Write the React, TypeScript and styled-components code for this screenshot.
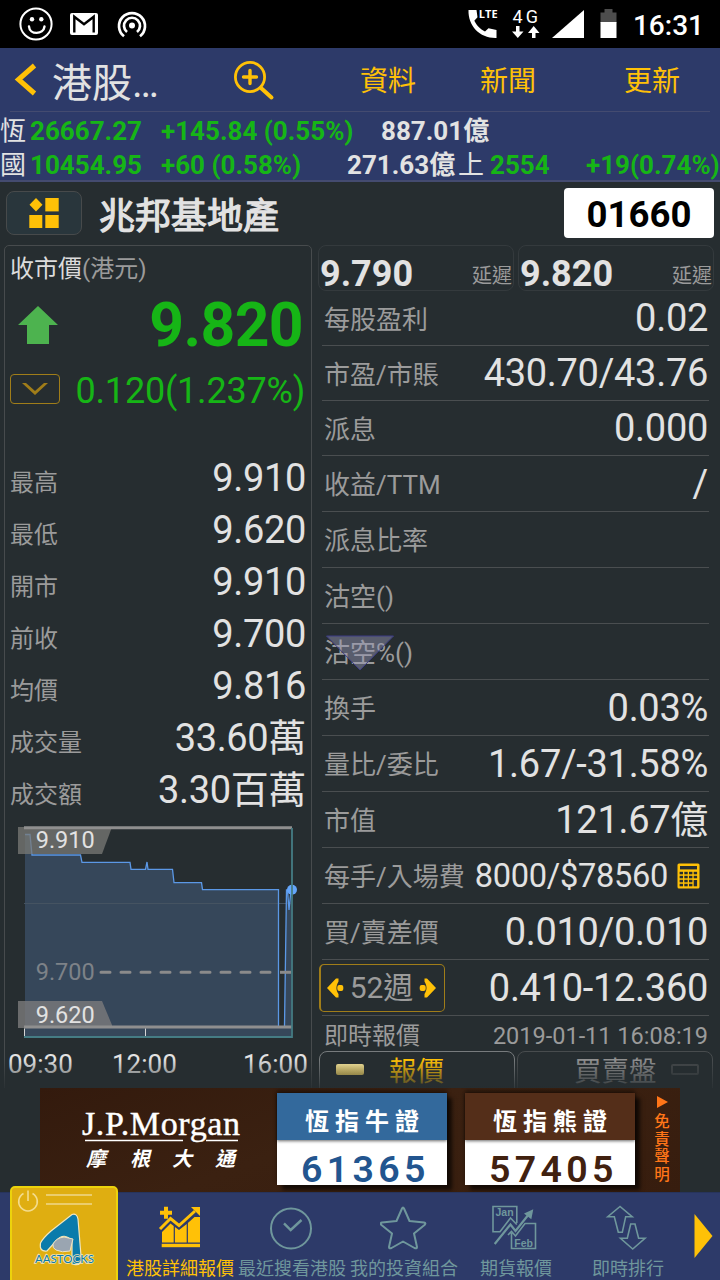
import React from "react";
import styled, { createGlobalStyle } from "styled-components";

const C = {
  bg: "#262d30",
  navy: "#2d3a69",
  gold: "#ffc107",
  green: "#16b516",
  text: "#e2e2e2",
  dim: "#9b9b9b",
  line: "#4a4e50",
  teal: "#6f979c",
};

const Global = createGlobalStyle`
  * { box-sizing: border-box; }
  body { margin: 0; background: ${C.bg}; }
`;

const Screen = styled.div`
  width: 720px;
  height: 1280px;
  display: flex;
  flex-direction: column;
  overflow: hidden;
  background: ${C.bg};
  color: ${C.text};
  font-family: Roboto, "Noto Sans CJK TC", sans-serif;
  white-space: nowrap;
`;

/* ---------- status bar ---------- */
const StatusBar = styled.div`
  height: 48px;
  display: flex;
  align-items: center;
  justify-content: space-between;
  padding: 0 16px 0 18px;
  background: #000;
  color: #fff;
  svg { overflow: visible; }
`;
const StatusGroup = styled.div<{ $gap: number }>`
  display: flex;
  align-items: center;
  gap: ${(p) => p.$gap}px;
`;
const Clock = styled.span`
  font-size: 28px;
  line-height: 48px;
  font-weight: 500;
  padding-top: 3px;
  margin-left: 2px;
`;

/* ---------- title bar and index ticker ---------- */
const TopBar = styled.header`
  height: 64px;
  display: flex;
  align-items: center;
  background: ${C.navy};
  padding: 0 10px;
`;
const TopInner = styled.div`
  flex: 1;
  height: 64px;
  display: grid;
  grid-template-columns: 42px 181px 127px 120px 144px 1fr;
  align-items: center;
  border-bottom: 1px solid #444b70;
`;
const Title = styled.h1`
  margin: 0;
  font-size: 40px;
  font-weight: 400;
  line-height: 55px;
  padding-top: 8px;
`;
const TopLink = styled.span`
  font-size: 28px;
  line-height: 40px;
  padding-top: 5px;
  color: ${C.gold};
`;
const Ticker = styled.div`
  height: 70px;
  padding-top: 2px;
  background: ${C.navy};
  border-bottom: 2px solid #444b70;
`;
const TickerRow = styled.div<{ $cols: string }>`
  display: grid;
  grid-template-columns: ${(p) => p.$cols};
  height: 34px;
  line-height: 34px;
  font-size: 26px;
`;
const TickName = styled.span``;
const TickNum = styled.span<{ $up?: boolean }>`
  font-weight: 700;
  color: ${(p) => (p.$up ? C.green : C.text)};
`;

/* ---------- stock heading ---------- */
const StockHead = styled.div`
  height: 63px;
  display: flex;
  align-items: center;
  padding: 0 6px 1px;
`;
const TileButton = styled.button`
  width: 76px;
  height: 44px;
  padding: 0;
  display: flex;
  align-items: center;
  justify-content: center;
  border: 1px solid #474a4b;
  border-radius: 8px;
  background: #29363c;
`;
const StockName = styled.h2`
  margin: 0 auto 0 17px;
  font-size: 36px;
  line-height: 53px;
  padding-top: 9px;
  font-weight: 400;
  -webkit-text-stroke: 1.2px ${C.text};
`;
const CodeBox = styled.div`
  width: 150px;
  height: 50px;
  border-radius: 4px;
  background: #fff;
  color: #000;
  text-align: center;
  font-size: 36.6px;
  font-weight: 700;
  line-height: 53px;
`;

/* ---------- main two columns ---------- */
const Main = styled.main`
  position: relative;
  height: 843px;
  flex: none;
  display: flex;
  gap: 6px;
  padding: 0 6px 0 4px;
  overflow: hidden;
`;
const BottomFade = styled.div`
  position: absolute;
  left: 0;
  right: 0;
  bottom: 0;
  height: 38px;
  background: linear-gradient(rgba(38, 45, 48, 0) 25%, rgba(38, 45, 48, 0.85));
  pointer-events: none;
`;
const PricePanel = styled.section`
  width: 308px;
  height: 860px;
  border: 1px solid #474b4d;
  border-radius: 5px;
`;
const PanelTitle = styled.div`
  height: 50px;
  padding-left: 5px;
  font-size: 24px;
  line-height: 47px;
  color: #dcdcdc;
`;
const Unit = styled.span`
  color: ${C.dim};
`;
const LastPrice = styled.div`
  height: 60px;
  display: flex;
  align-items: center;
  justify-content: space-between;
  padding: 0 8px 0 12px;
  color: ${C.green};
  font-size: 60.6px;
  letter-spacing: -0.6px;
  line-height: 66px;
  font-weight: 700;
`;
const Change = styled.div`
  height: 64px;
  display: flex;
  align-items: center;
  justify-content: space-between;
  padding: 6px 6px 0 5px;
  margin-bottom: 32px;
  color: ${C.green};
  font-size: 36px;
  letter-spacing: -0.2px;
  line-height: 63px;
`;
const DropButton = styled.button`
  width: 50px;
  height: 30px;
  padding: 0;
  margin-bottom: 4px;
  display: flex;
  align-items: center;
  justify-content: center;
  border: 1px solid #a07d19;
  border-radius: 4px;
  background: transparent;
`;
const QuoteRow = styled.div`
  height: 52px;
  display: flex;
  justify-content: space-between;
  padding: 0 5px;
`;
const QuoteLabel = styled.span`
  font-size: 24px;
  line-height: 62px;
  color: ${C.dim};
`;
const QuoteValue = styled.span`
  font-size: 38px;
  letter-spacing: -0.35px;
  line-height: 52px;
`;
const ChartBox = styled.div`
  margin: 4px 0 0 7px;
  height: 224px;
`;
const TimeAxis = styled.div`
  display: grid;
  grid-template-columns: 104px 131px 1fr;
  padding: 5px 0 0 3px;
  font-size: 26px;
  line-height: 30px;
`;

const DetailPanel = styled.section`
  flex: 1;
`;
const BidAsk = styled.div`
  display: flex;
  gap: 4px;
`;
const PriceBox = styled.div`
  width: 196px;
  height: 46px;
  display: flex;
  justify-content: space-between;
  border: 1px solid #343a3d;
  border-radius: 8px;
  padding: 0 1px;
`;
const BoxPrice = styled.b`
  font-size: 36px;
  line-height: 56px;
`;
const Delay = styled.span`
  font-size: 20px;
  line-height: 60px;
  color: ${C.dim};
`;
const DetailRow = styled.div<{ $h: number }>`
  position: relative;
  height: ${(p) => p.$h}px;
  margin: 0 5px 0 4px;
  padding: 0 1px 0 2px;
  display: flex;
  align-items: center;
  justify-content: space-between;
  border-bottom: 1px solid ${C.line};
`;
const DetailLabel = styled.span`
  font-size: 26px;
  line-height: 40px;
  padding-top: 3px;
  color: ${C.dim};
`;
const DetailValue = styled.span<{ $small?: boolean }>`
  display: flex;
  align-items: center;
  gap: 9px;
  font-size: ${(p) => (p.$small ? 32.6 : 38)}px;
  letter-spacing: -0.3px;
  line-height: 50px;
  padding-right: ${(p) => (p.$small ? 8 : 0)}px;
`;
const Pointer = styled.svg`
  position: absolute;
  left: 3px;
  top: 11px;
`;
const RangeButton = styled.button`
  width: 126px;
  height: 48px;
  margin-left: -5px;
  padding: 0 8px 0 6px;
  display: flex;
  align-items: center;
  justify-content: space-between;
  border: 1px solid #a07d19;
  border-left-width: 2px;
  border-radius: 5px;
  background: transparent;
  color: ${C.dim};
  font: inherit;
  font-size: 30px;
  line-height: 46px;
`;
const StampRow = styled.div`
  height: 35px;
  display: flex;
  justify-content: space-between;
  padding: 0 6px;
  font-size: 24px;
  line-height: 40px;
  color: ${C.dim};
`;
const Stamp = styled.span`
  font-size: 23.5px;
`;
const Tabs = styled.div`
  display: flex;
  gap: 2px;
  padding-left: 1px;
`;
const Tab = styled.div<{ $on?: boolean }>`
  width: 196px;
  height: 60px;
  display: flex;
  justify-content: space-between;
  padding: ${(p) => (p.$on ? "0 70px 0 16px" : "0 13px 0 56px")};
  border: 1px solid ${(p) => (p.$on ? "#777b7d" : "#484c4e")};
  border-radius: 8px;
  color: ${(p) => (p.$on ? C.gold : "#909090")};
  font-size: 27.5px;
  line-height: 39px;
`;
const Lamp = styled.i<{ $on?: boolean }>`
  width: 28px;
  height: 11px;
  margin-top: 12px;
  border-radius: 2px;
  border: ${(p) => (p.$on ? "0" : "2px solid #44484a")};
  background: ${(p) => (p.$on ? "linear-gradient(#ffeda0, #f5d560)" : "transparent")};
`;

/* ---------- advertisement ---------- */
const Ad = styled.aside`
  width: 640px;
  height: 104px;
  flex: none;
  margin-left: 40px;
  padding-top: 5px;
  display: flex;
  background: linear-gradient(160deg, #331a0d, #3b2111 45%, #371d0e);
`;
const Brand = styled.div`
  width: 237px;
`;
const Warrant = styled.div`
  width: 170px;
  height: 92px;
  margin-right: 18px;
  display: flex;
  flex-direction: column;
  background: #fff;
  box-shadow: 5px 5px 4px rgba(0, 0, 0, 0.65), 0 -3px 4px rgba(0, 0, 0, 0.35);
`;
const WarrantName = styled.div<{ $bg: string }>`
  height: 47px;
  background: ${(p) => p.$bg};
  box-shadow: 0 1px 3px rgba(0, 0, 0, 0.6);
  color: #fff;
  font-size: 24px;
  font-weight: 700;
  line-height: 59px;
  letter-spacing: 6px;
  padding-left: 28px;
`;
const WarrantCode = styled.div<{ $fg: string }>`
  height: 45px;
  color: ${(p) => p.$fg};
  font-size: 37.5px;
  font-weight: 600;
  line-height: 45px;
  letter-spacing: 4.3px;
  padding: 7px 0 0 24px;
`;
const Disclaimer = styled.div`
  width: 18px;
  display: flex;
  flex-direction: column;
  align-items: center;
  padding-top: 3px;
  color: #ff7518;
  font-size: 15.5px;
  font-weight: 500;
  line-height: 17.6px;
  svg { margin-bottom: 6px; flex: none; }
`;

/* ---------- bottom navigation ---------- */
const Nav = styled.nav`
  height: 88px;
  flex: none;
  display: flex;
  padding-left: 10px;
  background: ${C.navy};
  border-top: 1px solid #27345c;
`;
const HomeTile = styled.div`
  width: 108px;
  height: 110px;
  margin: -7px 6px 0 0;
  border: 2px solid #ecd30c;
  border-radius: 5px;
  background: #dfae11;
  z-index: 1;
`;
const NavItem = styled.div<{ $on?: boolean }>`
  width: 112px;
  padding-top: 11px;
  display: flex;
  flex-direction: column;
  align-items: center;
  color: ${(p) => (p.$on ? C.gold : C.teal)};
  font-size: 18px;
  line-height: 26px;
  svg { flex: none; }
`;
const More = styled.div`
  padding: 20px 0 0 10px;
`;

const quotes = [
  ["最高", "9.910"],
  ["最低", "9.620"],
  ["開市", "9.910"],
  ["前收", "9.700"],
  ["均價", "9.816"],
  ["成交量", "33.60萬"],
  ["成交額", "3.30百萬"],
];

const Calculator = () => (
  <svg width="23" height="26" viewBox="0 0 23 26">
    <rect x="0.5" y="0.5" width="22" height="25" rx="1.5" fill={C.gold} />
    <rect x="3" y="3" width="17" height="3.4" fill={C.bg} />
    {[0, 1, 2, 3].map((r) =>
      [0, 1, 2, 3].map((c) =>
        c === 3 && r > 1 ? null : (
          <rect key={`${r}${c}`} x={2.6 + c * 4.7} y={8.8 + r * 4} width="3.4" height="2.5" fill={C.bg} />
        ),
      ),
    )}
    <rect x="16.7" y="17" width="3.4" height="6.3" fill={C.bg} />
  </svg>
);

const details: { label: string; value: string; h: number; calc?: boolean; pointer?: boolean }[] = [
  { label: "每股盈利", value: "0.02", h: 55 },
  { label: "市盈/市賬", value: "430.70/43.76", h: 55 },
  { label: "派息", value: "0.000", h: 55 },
  { label: "收益/TTM", value: "/", h: 56 },
  { label: "派息比率", value: "", h: 56 },
  { label: "沽空()", value: "", h: 56 },
  { label: "沽空%()", value: "", h: 56, pointer: true },
  { label: "換手", value: "0.03%", h: 56 },
  { label: "量比/委比", value: "1.67/-31.58%", h: 56 },
  { label: "市值", value: "121.67億", h: 56 },
  { label: "每手/入場費", value: "8000/$78560", h: 56, calc: true },
  { label: "買/賣差價", value: "0.010/0.010", h: 56 },
];

const Chart = () => (
  <svg width="290" height="224" viewBox="12 820 290 224" fontSize="23.5" fontFamily="Roboto">
    <path
      d="M25 834.5H30L32 855H80.5L82 862.3H130L131 869.3H145.5L147 862L148 869.3H172.5L174 882.7H201.5L202.5 889.7H278.5V1026H284.5L286.5 890H287.5L289 910L291 890V1037H25Z"
      fill="#36475a"
    />
    <path d="M24 903.5H291" stroke="#455361" strokeWidth="1" />
    <path
      d="M25 834.5H30L32 855H80.5L82 862.3H130L131 869.3H145.5L147 862L148 869.3H172.5L174 882.7H201.5L202.5 889.7H278.5V1026M284.5 1026L286.5 890H287.5L289 910L291 890"
      fill="none"
      stroke="#5b98e6"
      strokeWidth="1.3"
    />
    <path d="M101 972.3H275" stroke="#8b8b8b" strokeWidth="3" strokeDasharray="9 11" strokeLinecap="round" />
    <path d="M280 972.3H291" stroke="#8b8b8b" strokeWidth="3" />
    <path d="M18 827H112L102 854H18Z" fill="#7a7976" fillOpacity="0.75" />
    <path d="M18 1001H102L112 1025V1028H18Z" fill="#7c7b7c" fillOpacity="0.8" />
    <path d="M24 827.8H292" stroke="#8f8f8f" strokeWidth="3" />
    <path d="M24 1027H292" stroke="#8f8f8f" strokeWidth="3" />
    <circle cx="292" cy="889.7" r="5" fill="#64a6fb" />
    <path d="M292 828V1037H24" fill="none" stroke="#457c84" strokeWidth="1.8" />
    <path d="M24.5 1028.5V1036M145.5 1028.5V1036" stroke="#d5d5d5" strokeWidth="1" />
    <text x="35.7" y="848" fill={C.text}>9.910</text>
    <text x="35.7" y="980" fill="#7d8288">9.700</text>
    <text x="35.7" y="1023" fill={C.text}>9.620</text>
  </svg>
);

export default function App() {
  return (
    <>
      <Global />
      <Screen>
        <StatusBar>
          <StatusGroup $gap={17}>
            <svg width="36" height="36" viewBox="0 0 36 36" fill="none" stroke="#fff">
              <circle cx="18" cy="18" r="15.6" strokeWidth="2" />
              <path d="M11 20.5C11.5 29 25.5 29 26.5 20.5" strokeWidth="2.4" strokeLinecap="round" />
              <circle cx="14" cy="13.3" r="2.2" fill="#fff" stroke="none" />
              <circle cx="23.3" cy="13.3" r="2.2" fill="#fff" stroke="none" />
            </svg>
            <svg width="28" height="24" viewBox="1 0 28 24">
              <rect x="0" y="1" width="28" height="22" rx="2" fill="#fff" />
              <path d="M4.3 20.5V4.8L14 12.3L23.7 4.8V20.5" fill="none" stroke="#000" strokeWidth="2.4" />
            </svg>
            <svg width="30" height="30" viewBox="0 0 30 30" fill="none" stroke="#fff" strokeWidth="2.7">
              <path d="M8 27.3A13 13 0 1 1 24 27.3" />
              <path d="M11 23A8 8 0 1 1 21 23" />
              <circle cx="16" cy="16.5" r="3" fill="#fff" stroke="none" />
            </svg>
          </StatusGroup>
          <StatusGroup $gap={14}>
            <svg width="30" height="30" viewBox="0 0 30 30">
              <path
                d="M0.5 1H8.5L9.5 8.2L6.3 11.8C9 17 12 20 17 22.4L20.5 19.3L28.5 21V29C12 29.5 0 17 0.5 1Z"
                fill="#fff"
              />
              <text x="10.8" y="9" fontSize="11" fontWeight="700" fontFamily="Open Sans" fill="#fff">LTE</text>
            </svg>
            <svg width="26" height="30" viewBox="0 0 26 30" fill="#fff">
              <text x="0.5" y="14" fontSize="18" fontFamily="Roboto">4</text>
              <text x="13.8" y="14" fontSize="18" fontFamily="Roboto">G</text>
              <path d="M4 17H7.5V22.5H11.5L5.8 29L0 22.5H4Z" />
              <path d="M20 29H23.5V24H27.5L21.7 17L16 24H20Z" />
            </svg>
            <svg width="34" height="30" viewBox="0 0 34 30">
              <path d="M0 29L32 1V29Z" fill="#fff" />
            </svg>
            <svg width="17" height="30" viewBox="0 0 17 30">
              <path d="M0.5 3.5H4.5V0H12.5V3.5H16.5V14H0.5Z" fill="#4d4d4d" />
              <path d="M0.5 13H16.5V29H0.5Z" fill="#fff" />
            </svg>
            <Clock>16:31</Clock>
          </StatusGroup>
        </StatusBar>

        <TopBar>
          <TopInner>
            <svg width="32" height="36" viewBox="0 0 32 36">
              <path d="M24.5 3.5L8.5 17.5L24.5 31.5" fill="none" stroke={C.gold} strokeWidth="5" />
            </svg>
            <Title>港股…</Title>
            <svg width="44" height="42" viewBox="0 0 44 42" fill="none" stroke={C.gold} strokeLinecap="round">
              <circle cx="17" cy="18" r="14.6" strokeWidth="2.8" />
              <path d="M17 11.5V24.5M10.5 18H23.5" strokeWidth="3.4" />
              <path d="M28 29L38.5 38.5" strokeWidth="4" />
            </svg>
            <TopLink>資料</TopLink>
            <TopLink>新聞</TopLink>
            <TopLink>更新</TopLink>
          </TopInner>
        </TopBar>
        <Ticker>
          <TickerRow $cols="30px 131px 220px 1fr">
            <TickName>恆</TickName>
            <TickNum $up>26667.27</TickNum>
            <TickNum $up>+145.84 (0.55%)</TickNum>
            <TickNum>887.01億</TickNum>
          </TickerRow>
          <TickerRow $cols="30px 131px 186px 111px 32px 96px 1fr">
            <TickName>國</TickName>
            <TickNum $up>10454.95</TickNum>
            <TickNum $up>+60 (0.58%)</TickNum>
            <TickNum>271.63億</TickNum>
            <TickName>上</TickName>
            <TickNum $up>2554</TickNum>
            <TickNum $up>+19(0.74%)</TickNum>
          </TickerRow>
        </Ticker>

        <StockHead>
          <TileButton>
            <svg width="30" height="30" viewBox="0 0 30 30" fill={C.gold}>
              <path d="M7 0L13.5 6.7L7 13.4L0.5 6.7Z" />
              <rect x="16.3" y="0" width="13.4" height="13.4" />
              <rect x="0.3" y="17" width="13" height="13" />
              <rect x="16.3" y="17" width="13.4" height="13" />
            </svg>
          </TileButton>
          <StockName>兆邦基地產</StockName>
          <CodeBox>01660</CodeBox>
        </StockHead>

        <Main>
          <PricePanel>
            <PanelTitle>
              收市價<Unit>(港元)</Unit>
            </PanelTitle>
            <LastPrice>
              <svg width="42" height="40" viewBox="0 0 42 40">
                <path d="M21 0L41 19H32V38H10V19H1Z" fill="#4db34f" />
              </svg>
              <span>9.820</span>
            </LastPrice>
            <Change>
              <DropButton>
                <svg width="26" height="12" viewBox="0 0 26 12">
                  <path d="M0 0H4L13 8L22 0H26L13 12Z" fill="#a07d19" />
                </svg>
              </DropButton>
              <span>0.120(1.237%)</span>
            </Change>
            {quotes.map(([k, v]) => (
              <QuoteRow key={k}>
                <QuoteLabel>{k}</QuoteLabel>
                <QuoteValue>{v}</QuoteValue>
              </QuoteRow>
            ))}
            <ChartBox>
              <Chart />
            </ChartBox>
            <TimeAxis>
              <span>09:30</span>
              <span>12:00</span>
              <span>16:00</span>
            </TimeAxis>
          </PricePanel>

          <DetailPanel>
            <BidAsk>
              <PriceBox>
                <BoxPrice>9.790</BoxPrice>
                <Delay>延遲</Delay>
              </PriceBox>
              <PriceBox>
                <BoxPrice>9.820</BoxPrice>
                <Delay>延遲</Delay>
              </PriceBox>
            </BidAsk>
            {details.map((d) => (
              <DetailRow key={d.label} $h={d.h}>
                <DetailLabel>{d.label}</DetailLabel>
                <DetailValue $small={d.calc}>
                  {d.value}
                  {d.calc && <Calculator />}
                </DetailValue>
                {d.pointer && (
                  <Pointer width="70" height="37" viewBox="0 0 70 37">
                    <path d="M1.5 1H68.5L35 35Z" fill="#9a9ab8" fillOpacity="0.45" stroke="#3d3d86" strokeWidth="1" />
                  </Pointer>
                )}
              </DetailRow>
            ))}
            <DetailRow $h={56}>
              <RangeButton>
                <svg width="17" height="20" viewBox="0 0 17 20" fill={C.gold}>
                  <path d="M0 10L9 0.5H11.5V3.5C8.8 8 8.8 12 11.5 16V19.5H9Z" />
                  <rect x="10.3" y="7" width="6" height="6" rx="2" />
                </svg>
                52週
                <svg width="17" height="20" viewBox="0 0 17 20" fill={C.gold}>
                  <path d="M17 10L8 0.5H5.5V3.5C8.2 8 8.2 12 5.5 16V19.5H8Z" />
                  <rect x="0.7" y="7" width="6" height="6" rx="2" />
                </svg>
              </RangeButton>
              <DetailValue>0.410-12.360</DetailValue>
            </DetailRow>
            <StampRow>
              <span>即時報價</span>
              <Stamp>2019-01-11 16:08:19</Stamp>
            </StampRow>
            <Tabs>
              <Tab $on>
                <Lamp $on />
                報價
              </Tab>
              <Tab>
                買賣盤
                <Lamp />
              </Tab>
            </Tabs>
          </DetailPanel>
          <BottomFade />
        </Main>

        <Ad>
          <Brand>
            <svg width="237" height="92" viewBox="0 0 237 92" fill="#fff">
              <text x="42" y="42" fontSize="34" fontFamily="Liberation Serif" textLength="158" stroke="#fff" strokeWidth="0.4">J.P.Morgan</text>
              <path d="M45 47.5H143M166 47.5H198" stroke="#fff" strokeWidth="1.6" />
              <g fontSize="20" fontWeight="700" fontStyle="italic" fontFamily="Noto Sans CJK TC" textAnchor="middle">
                <text x="56" y="73">摩</text>
                <text x="100" y="73">根</text>
                <text x="142" y="73">大</text>
                <text x="185" y="73">通</text>
              </g>
            </svg>
          </Brand>
          <Warrant>
            <WarrantName $bg="#33699c">恆指牛證</WarrantName>
            <WarrantCode $fg="#22558f">61365</WarrantCode>
          </Warrant>
          <Warrant>
            <WarrantName $bg="#542e19">恆指熊證</WarrantName>
            <WarrantCode $fg="#41210f">57405</WarrantCode>
          </Warrant>
          <Disclaimer>
            <svg width="11" height="12" viewBox="0 0 11 12">
              <path d="M0 0L11 6L0 12Z" fill="#ff7518" />
            </svg>
            <span>免</span>
            <span>責</span>
            <span>聲</span>
            <span>明</span>
          </Disclaimer>
        </Ad>

        <Nav>
          <HomeTile>
            <svg width="104" height="92" viewBox="0 0 104 92" fill="none">
              <path d="M11.5 5.5A9.3 9.3 0 1 0 20.5 5.5M16 2.5V13" stroke="#f3dc8e" strokeWidth="1.6" />
              <path d="M34 7H80M34 16H80" stroke="#f0d88a" strokeWidth="1.3" />
              <path
                d="M60 26.5Q65 25 66 31L69.5 74Q66 78 60 76L60 53Q52 44 45 52L35 63Q27 64 28.5 55Q31 50 39 43Z"
                fill="#0a7bab"
                stroke="#f3e7bd"
                strokeWidth="1.2"
              />
              <path d="M41 56Q44 50 52 49L61 51L58 63Q50 65 44 62Q40 60 41 56Z" fill="#9aa5b1" stroke="#eee4c4" strokeWidth="1" />
              <text
                x="23"
                y="75"
                fontSize="11.5"
                fontFamily="Lato"
                fontWeight="400"
                textLength="59"
                fill="#0a7bab"
                stroke="#efe3b8"
                strokeWidth="1.6"
                paintOrder="stroke"
              >
                AASTOCKS
              </text>
            </svg>
          </HomeTile>
          <NavItem $on>
            <svg width="48" height="52" viewBox="0 0 48 52" fill={C.gold}>
              <path d="M8 2.7H12V6.7H16V10.7H12V14.7H8V10.7H4V6.7H8Z" />
              <path d="M4 25L14.5 14.5L23 21.5L39 7" fill="none" stroke={C.gold} strokeWidth="3" />
              <path d="M35 3H44V12Z" />
              <path d="M6 28L14.5 19.5L17.7 22V38.5H6ZM18.9 23L23 26L30.7 20V38.5H18.9ZM31.9 19L38.5 13H44V38.5H31.9Z" />
              <rect x="5.7" y="39.8" width="38.3" height="3.4" />
            </svg>
            港股詳細報價
          </NavItem>
          <NavItem>
            <svg width="48" height="52" viewBox="0 0 48 52" fill="none" stroke={C.teal} strokeWidth="2">
              <circle cx="23" cy="24.5" r="20" />
              <path d="M16 19.3L22.7 26L33.5 16" strokeWidth="2.4" />
            </svg>
            最近搜看港股
          </NavItem>
          <NavItem>
            <svg width="48" height="52" viewBox="0 0 48 52" fill="none" stroke={C.teal} strokeWidth="2" strokeLinejoin="round">
              <path d="M22 4.5Q23 2.5 24 4.5L29.5 17L44 18.5Q46.5 19 44.5 21L34 29.5L37 43Q37 45 34.5 44L23 37.5L11.5 44Q9 45 9 43L12 29.5L1.5 21Q-0.5 19 2 18.5L16.5 17Z" />
            </svg>
            我的投資組合
          </NavItem>
          <NavItem>
            <svg width="48" height="52" viewBox="1 0 48 52" fill="none" stroke={C.teal} strokeWidth="1.6">
              <path d="M25.8 19V2.5H2V27.7H9L19.5 14L25.8 20.5" />
              <path d="M20.5 29V44.5H44.5V19.5H34L24.5 32L20.5 27.5L17 31" />
              <path d="M3.7 40L19.5 20.5L24.5 27L38 10" strokeWidth="2.2" />
              <path d="M42.3 5.3L33 9.5L40.3 15.3Z" fill={C.teal} stroke="none" />
              <g fill={C.teal} stroke="none" fontFamily="Liberation Sans" fontSize="10.5" fontWeight="700">
                <text x="4.5" y="12.2">Jan</text>
                <text x="23.3" y="42.7">Feb</text>
              </g>
            </svg>
            期貨報價
          </NavItem>
          <NavItem>
            <svg width="48" height="52" viewBox="0 0 48 52" fill="none" stroke={C.teal} strokeWidth="1.6">
              <path d="M16 2.5L3.8 12.7H10.3L14.3 28.3H18.3L21.7 12.7H28.2Z" />
              <path d="M28.7 45L16.5 34.3H23.3L26.7 20H31L34.6 34.3H41Z" />
            </svg>
            即時排行
          </NavItem>
          <More>
            <svg width="20" height="46" viewBox="0 0 20 46">
              <path d="M0.5 1L18.5 23L0.5 45Z" fill={C.gold} />
            </svg>
          </More>
        </Nav>
      </Screen>
    </>
  );
}
